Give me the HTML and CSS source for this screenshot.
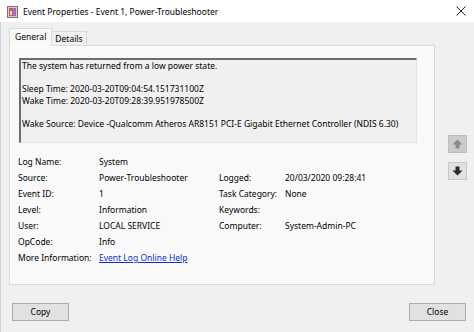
FILE: index.html
```html
<!DOCTYPE html>
<html>
<head>
<meta charset="utf-8">
<link rel="stylesheet" href="styles.css">
</head>
<body>
<div class="window">
  <div class="titlebar">
    <svg class="appicon" width="11" height="12" viewBox="0 0 11 12">
      <rect x="0.5" y="0.5" width="10" height="11" fill="#f3d36a" stroke="#7b6aa8"/>
      <rect x="2" y="2" width="7" height="8" fill="#c94f9e"/>
      <rect x="3" y="5" width="2" height="4" fill="#f7e48a"/>
      <rect x="6" y="3" width="2" height="6" fill="#6a8fd3"/>
    </svg>
    <span class="title">Event Properties - Event 1, Power-Troubleshooter</span>
    <svg class="closex" width="10" height="10" viewBox="0 0 10 10">
      <path d="M0.5 0.5 L9.5 9.5 M9.5 0.5 L0.5 9.5" stroke="#222" stroke-width="1"/>
    </svg>
  </div>
  <div class="client">
    <div class="tabs">
      <div class="tab active">General</div>
      <div class="tab">Details</div>
    </div>
    <div class="mainrow">
      <div class="panel">
        <div class="textbox">
          <p>The system has returned from a low power state.</p>
          <p>Sleep Time: 2020-03-20T09:04:54.151731100Z<br>Wake Time: 2020-03-20T09:28:39.951978500Z</p>
          <p>Wake Source: Device -Qualcomm Atheros AR8151 PCI-E Gigabit Ethernet Controller (NDIS 6.30)</p>
        </div>
        <div class="fields">
          <span class="lbl">Log Name:</span><span class="val">System</span><span></span><span></span>
          <span class="lbl">Source:</span><span class="val">Power-Troubleshooter</span><span class="lbl">Logged:</span><span class="val">20/03/2020 09:28:41</span>
          <span class="lbl">Event ID:</span><span class="val">1</span><span class="lbl">Task Category:</span><span class="val">None</span>
          <span class="lbl">Level:</span><span class="val">Information</span><span class="lbl">Keywords:</span><span class="val"></span>
          <span class="lbl">User:</span><span class="val">LOCAL SERVICE</span><span class="lbl">Computer:</span><span class="val">System-Admin-PC</span>
          <span class="lbl">OpCode:</span><span class="val">Info</span><span></span><span></span>
          <span class="lbl">More Information:</span><span class="val"><a class="link">Event Log Online Help</a></span><span></span><span></span>
        </div>
      </div>
      <div class="arrows">
        <div class="abtn disabled">
          <svg width="11" height="10" viewBox="0 0 11 10"><path d="M5.5 0.5 L10.5 5.5 L7.5 5.5 L7.5 9.5 L3.5 9.5 L3.5 5.5 L0.5 5.5 Z" fill="#8c8c8c"/></svg>
        </div>
        <div class="abtn">
          <svg width="11" height="10" viewBox="0 0 11 10"><path d="M5.5 9.5 L10.5 4.5 L7.5 4.5 L7.5 0.5 L3.5 0.5 L3.5 4.5 L0.5 4.5 Z" fill="#2a2a2a"/></svg>
        </div>
      </div>
    </div>
    <div class="footer">
      <button class="btn">Copy</button>
      <button class="btn">Close</button>
    </div>
  </div>
</div>
</body>
</html>
```

FILE: styles.css
```css
* { box-sizing: border-box; }
html, body { margin: 0; padding: 0; }
body {
  width: 474px;
  height: 332px;
  overflow: hidden;
  font-family: "Noto Sans", "Open Sans", sans-serif;
  font-size: 8.5px;
  color: #000;
  background: #f0f0f0;
}
.window {
  width: 474px;
  height: 332px;
  display: flex;
  flex-direction: column;
}
.titlebar {
  height: 22px;
  background: #ffffff;
  display: flex;
  align-items: center;
  padding-left: 7px;
  padding-right: 8px;
  flex: none;
}
.appicon { flex: none; margin-top: 1px; }
.title {
  margin-left: 5px;
  font-size: 8.5px;
  color: #000;
  flex: 1;
}
.closex { flex: none; }
.client {
  flex: 1;
  padding: 6px 0 0 8px;
  display: flex;
  flex-direction: column;
  border-left: 1px solid #cfcfcf;
}
.tabs {
  display: flex;
  align-items: flex-end;
  height: 17px;
  position: relative;
  z-index: 1;
}
.tab {
  height: 14px;
  padding: 0 3px;
  border: 1px solid #d9d9d9;
  border-bottom: none;
  background: #f0f0f0;
  line-height: 14px;
  margin-left: -1px;
}
.tab.active {
  height: 18px;
  margin-left: 0;
  background: #f9f9f9;
  padding: 0 5px;
  line-height: 15px;
  margin-bottom: -1px;
}
.mainrow {
  display: flex;
  align-items: flex-start;
}
.panel {
  width: 426px;
  height: 240px;
  border: 1px solid #d9d9d9;
  background: #f9f9f9;
  padding: 12px 0 0 9px;
  box-shadow: inset 1px 1px 0 #ffffff;
}
.textbox {
  width: 398px;
  height: 85px;
  border-top: 2px solid #6d6d6d;
  border-left: 2px solid #6d6d6d;
  border-right: 1px solid #e3e3e3;
  border-bottom: 1px solid #e3e3e3;
  background: #f0f0f0;
  padding: 0 0 0 1px;
  line-height: 11.6px;
}
.textbox p { margin: 0 0 11.6px 0; white-space: nowrap; }
.fields {
  display: grid;
  grid-template-columns: 81px 120px 66px 1fr;
  grid-auto-rows: 16px;
  margin-top: 11px;
  margin-left: -1px;
  line-height: 16px;
}
.lbl, .val { white-space: nowrap; }
.link { color: #0a2fd1; text-decoration: underline; }
.arrows {
  display: flex;
  flex-direction: column;
  gap: 9px;
  margin-left: 13px;
  margin-top: 90px;
}
.abtn {
  width: 19px;
  height: 18px;
  border: 1px solid #c8c8c8;
  background: #e1e1e1;
  display: flex;
  align-items: center;
  justify-content: center;
}
.abtn.disabled { background: #cccccc; border-color: #bfbfbf; }
.footer {
  display: flex;
  justify-content: space-between;
  padding: 18px 8px 0 3px;
}
.btn {
  width: 57px;
  height: 18px;
  border: 1px solid #adadad;
  background: #e1e1e1;
  font-family: "Noto Sans", "Open Sans", sans-serif;
  font-size: 8.5px;
  padding: 0;
  line-height: 14px;
  color: #000;
}
```
